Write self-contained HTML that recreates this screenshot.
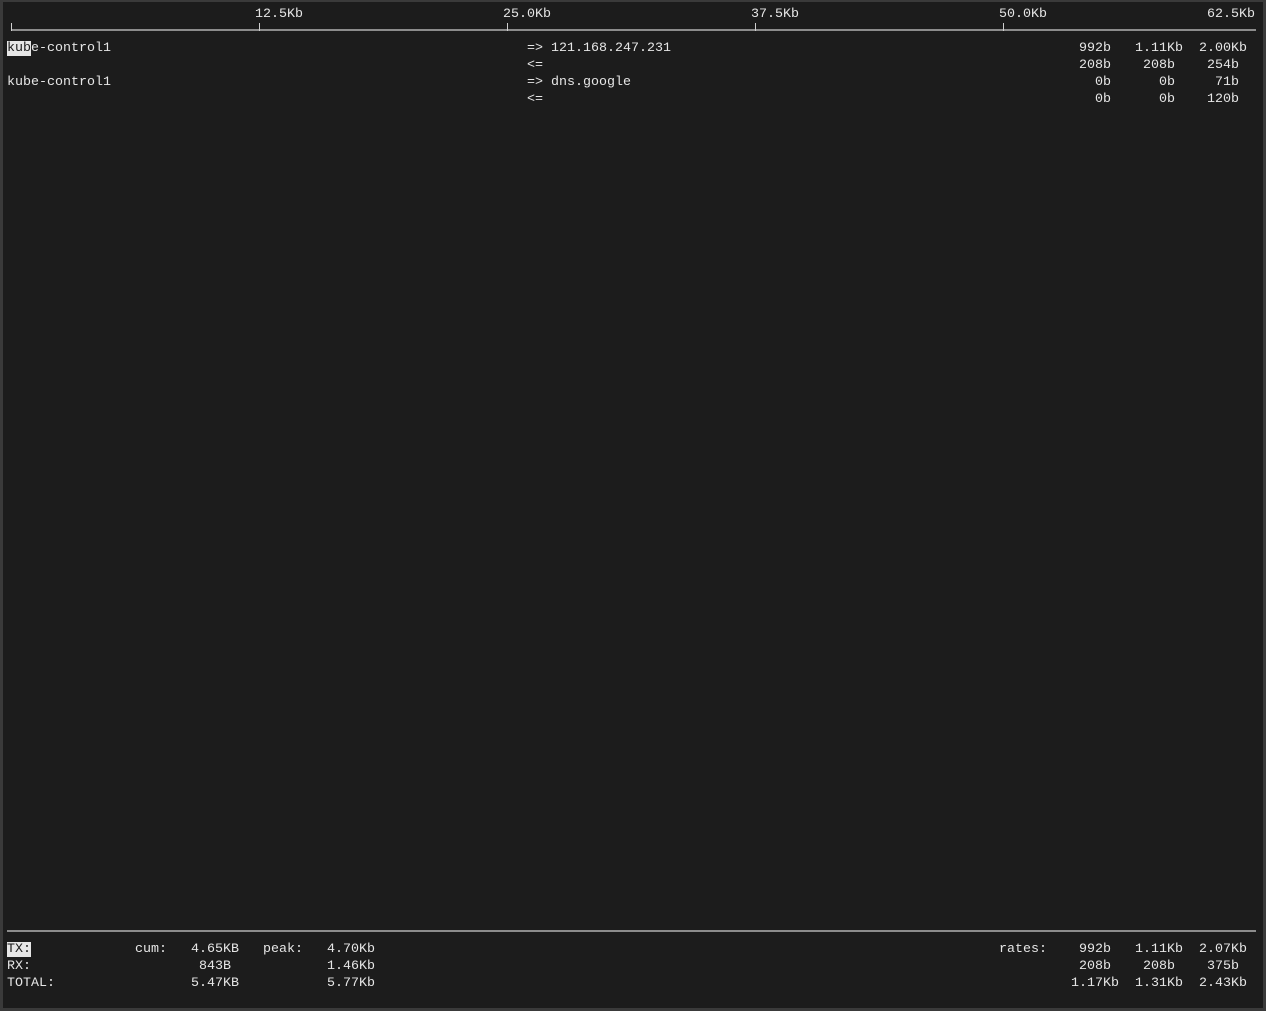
<!DOCTYPE html>
<html><head><meta charset="utf-8"><style>
html,body{margin:0;padding:0}
body{width:1266px;height:1011px;background:#3a3a3a;position:relative;overflow:hidden;font-family:"Liberation Mono","DejaVu Sans Mono",monospace;font-size:13.33px;color:#e6e6e6}
#term{position:absolute;left:3px;top:2px;width:1260px;height:1006px;background:#1c1c1c}
.t{position:absolute;white-space:pre;line-height:17px;height:17px;margin-top:1px}
.hl{background:#e6e6e6;color:#1c1c1c}
.line{position:absolute;left:11px;width:1245px;height:2px;background:#8c8c8c}
.tick{position:absolute;width:1px;height:8px;background:#cfcfcf;top:23px}
</style></head><body>
<div id="term"></div>
<div class="t" style="left:255px;top:5px">12.5Kb</div>
<div class="t" style="left:503px;top:5px">25.0Kb</div>
<div class="t" style="left:751px;top:5px">37.5Kb</div>
<div class="t" style="left:999px;top:5px">50.0Kb</div>
<div class="t" style="left:1207px;top:5px">62.5Kb</div>
<div class="line" style="top:29px"></div>
<div class="tick" style="left:11px"></div>
<div class="tick" style="left:259px"></div>
<div class="tick" style="left:507px"></div>
<div class="tick" style="left:755px"></div>
<div class="tick" style="left:1003px"></div>

<div class="t" style="left:7px;top:39px"><span class="hl">kub</span>e-control1</div>
<div class="t" style="left:527px;top:39px">=&gt; 121.168.247.231</div>
<div class="t" style="left:527px;top:56px">&lt;=</div>
<div class="t" style="left:7px;top:73px">kube-control1</div>
<div class="t" style="left:527px;top:73px">=&gt; dns.google</div>
<div class="t" style="left:527px;top:90px">&lt;=</div>

<div class="t" style="left:1079px;top:39px">992b</div>
<div class="t" style="left:1135px;top:39px">1.11Kb</div>
<div class="t" style="left:1199px;top:39px">2.00Kb</div>
<div class="t" style="left:1079px;top:56px">208b</div>
<div class="t" style="left:1143px;top:56px">208b</div>
<div class="t" style="left:1207px;top:56px">254b</div>
<div class="t" style="left:1095px;top:73px">0b</div>
<div class="t" style="left:1159px;top:73px">0b</div>
<div class="t" style="left:1215px;top:73px">71b</div>
<div class="t" style="left:1095px;top:90px">0b</div>
<div class="t" style="left:1159px;top:90px">0b</div>
<div class="t" style="left:1207px;top:90px">120b</div>

<div class="line" style="top:930px;left:7px;width:1249px"></div>

<div class="t" style="left:7px;top:940px"><span class="hl">TX:</span></div>
<div class="t" style="left:135px;top:940px">cum:</div>
<div class="t" style="left:191px;top:940px">4.65KB</div>
<div class="t" style="left:263px;top:940px">peak:</div>
<div class="t" style="left:327px;top:940px">4.70Kb</div>
<div class="t" style="left:7px;top:957px">RX:</div>
<div class="t" style="left:199px;top:957px">843B</div>
<div class="t" style="left:327px;top:957px">1.46Kb</div>
<div class="t" style="left:7px;top:974px">TOTAL:</div>
<div class="t" style="left:191px;top:974px">5.47KB</div>
<div class="t" style="left:327px;top:974px">5.77Kb</div>

<div class="t" style="left:999px;top:940px">rates:</div>
<div class="t" style="left:1079px;top:940px">992b</div>
<div class="t" style="left:1135px;top:940px">1.11Kb</div>
<div class="t" style="left:1199px;top:940px">2.07Kb</div>
<div class="t" style="left:1079px;top:957px">208b</div>
<div class="t" style="left:1143px;top:957px">208b</div>
<div class="t" style="left:1207px;top:957px">375b</div>
<div class="t" style="left:1071px;top:974px">1.17Kb</div>
<div class="t" style="left:1135px;top:974px">1.31Kb</div>
<div class="t" style="left:1199px;top:974px">2.43Kb</div>
</body></html>
